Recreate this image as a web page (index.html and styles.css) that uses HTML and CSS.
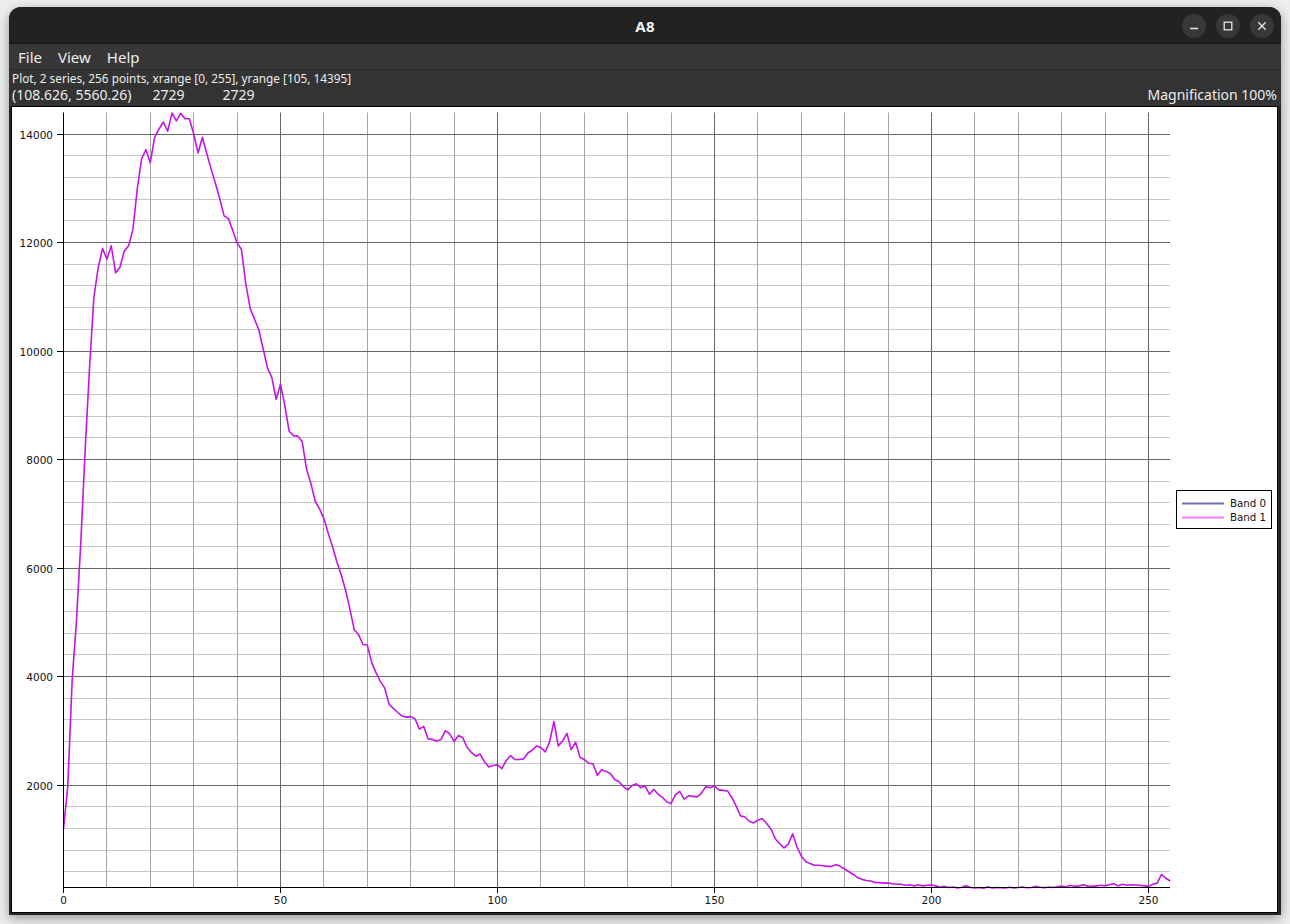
FILE: index.html
```html
<!DOCTYPE html>
<html>
<head>
<meta charset="utf-8">
<title>A8</title>
<link rel="stylesheet" href="styles.css">
</head>
<body>
<div class="window">
  <header class="titlebar">
    <div class="tb-spacer"></div>
    <div class="tb-title">A8</div>
    <div class="tb-controls">
      <span class="tb-btn"><svg width="24" height="24" viewBox="0 0 24 24"><line x1="8" y1="14.5" x2="16" y2="14.5" stroke="#e6e6e6" stroke-width="1.3"/></svg></span>
      <span class="tb-btn"><svg width="24" height="24" viewBox="0 0 24 24"><rect x="8.2" y="8.2" width="7.6" height="7.6" fill="none" stroke="#e6e6e6" stroke-width="1.3"/></svg></span>
      <span class="tb-btn"><svg width="24" height="24" viewBox="0 0 24 24"><path d="M8.3 8.3 L15.7 15.7 M15.7 8.3 L8.3 15.7" stroke="#e6e6e6" stroke-width="1.3" fill="none"/></svg></span>
    </div>
  </header>
  <nav class="menubar">
    <span class="menu-item">File</span>
    <span class="menu-item">View</span>
    <span class="menu-item">Help</span>
  </nav>
  <div class="infobar">
    <div class="info-line1">Plot, 2 series, 256 points, xrange [0, 255], yrange [105, 14395]</div>
    <div class="info-line2">
      <span class="coords">(108.626, 5560.26)</span>
      <span class="val1">2729</span>
      <span class="val2">2729</span>
      <span class="magnif">Magnification 100%</span>
    </div>
  </div>
  <div class="plotbox">
    <svg class="plot" width="1265" height="805" viewBox="12 107 1265 805">
      <rect x="12" y="107" width="1265" height="805" fill="#ffffff"/>
      <g class="grid-hminor">
        <line x1="63" x2="1170" y1="871.5" y2="871.5"/><line x1="63" x2="1170" y1="850.5" y2="850.5"/><line x1="63" x2="1170" y1="828.5" y2="828.5"/><line x1="63" x2="1170" y1="806.5" y2="806.5"/>
        <line x1="63" x2="1170" y1="763.5" y2="763.5"/><line x1="63" x2="1170" y1="741.5" y2="741.5"/><line x1="63" x2="1170" y1="719.5" y2="719.5"/><line x1="63" x2="1170" y1="698.5" y2="698.5"/>
        <line x1="63" x2="1170" y1="654.5" y2="654.5"/><line x1="63" x2="1170" y1="633.5" y2="633.5"/><line x1="63" x2="1170" y1="611.5" y2="611.5"/><line x1="63" x2="1170" y1="589.5" y2="589.5"/>
        <line x1="63" x2="1170" y1="546.5" y2="546.5"/><line x1="63" x2="1170" y1="524.5" y2="524.5"/><line x1="63" x2="1170" y1="502.5" y2="502.5"/><line x1="63" x2="1170" y1="481.5" y2="481.5"/>
        <line x1="63" x2="1170" y1="437.5" y2="437.5"/><line x1="63" x2="1170" y1="416.5" y2="416.5"/><line x1="63" x2="1170" y1="394.5" y2="394.5"/><line x1="63" x2="1170" y1="372.5" y2="372.5"/>
        <line x1="63" x2="1170" y1="329.5" y2="329.5"/><line x1="63" x2="1170" y1="307.5" y2="307.5"/><line x1="63" x2="1170" y1="285.5" y2="285.5"/><line x1="63" x2="1170" y1="264.5" y2="264.5"/>
        <line x1="63" x2="1170" y1="220.5" y2="220.5"/><line x1="63" x2="1170" y1="199.5" y2="199.5"/><line x1="63" x2="1170" y1="177.5" y2="177.5"/><line x1="63" x2="1170" y1="155.5" y2="155.5"/>
      </g>
      <g class="grid-vminor">
        <line y1="112.5" y2="887" x1="106.5" x2="106.5"/><line y1="112.5" y2="887" x1="150.5" x2="150.5"/><line y1="112.5" y2="887" x1="193.5" x2="193.5"/><line y1="112.5" y2="887" x1="237.5" x2="237.5"/>
        <line y1="112.5" y2="887" x1="323.5" x2="323.5"/><line y1="112.5" y2="887" x1="367.5" x2="367.5"/><line y1="112.5" y2="887" x1="410.5" x2="410.5"/><line y1="112.5" y2="887" x1="454.5" x2="454.5"/>
        <line y1="112.5" y2="887" x1="540.5" x2="540.5"/><line y1="112.5" y2="887" x1="584.5" x2="584.5"/><line y1="112.5" y2="887" x1="627.5" x2="627.5"/><line y1="112.5" y2="887" x1="671.5" x2="671.5"/>
        <line y1="112.5" y2="887" x1="757.5" x2="757.5"/><line y1="112.5" y2="887" x1="801.5" x2="801.5"/><line y1="112.5" y2="887" x1="844.5" x2="844.5"/><line y1="112.5" y2="887" x1="888.5" x2="888.5"/>
        <line y1="112.5" y2="887" x1="974.5" x2="974.5"/><line y1="112.5" y2="887" x1="1018.5" x2="1018.5"/><line y1="112.5" y2="887" x1="1061.5" x2="1061.5"/><line y1="112.5" y2="887" x1="1105.5" x2="1105.5"/>
      </g>
      <g class="grid-major">
        <line x1="63" x2="1170" y1="785.5" y2="785.5"/><line x1="63" x2="1170" y1="676.5" y2="676.5"/><line x1="63" x2="1170" y1="568.5" y2="568.5"/><line x1="63" x2="1170" y1="459.5" y2="459.5"/>
        <line x1="63" x2="1170" y1="351.5" y2="351.5"/><line x1="63" x2="1170" y1="242.5" y2="242.5"/><line x1="63" x2="1170" y1="134.5" y2="134.5"/>
        <line y1="112.5" y2="887" x1="280.5" x2="280.5"/><line y1="112.5" y2="887" x1="497.5" x2="497.5"/><line y1="112.5" y2="887" x1="714.5" x2="714.5"/><line y1="112.5" y2="887" x1="931.5" x2="931.5"/><line y1="112.5" y2="887" x1="1148.5" x2="1148.5"/>
      </g>
      <g transform="translate(63.5,894) scale(4.34,-0.05425)">
        <polyline class="series" points="0,1200 1,2000 2,3950 3,5050 4,6500 5,8200 6,9700 7,11000 8,11550 9,11900 10,11700 11,11950 12,11450 13,11550 14,11850 15,11950 16,12250 17,13000 18,13550 19,13720 20,13480 21,13950 22,14100 23,14230 24,14060 25,14395 26,14250 27,14390 28,14290 29,14290 30,14010 31,13660 32,13950 33,13650 34,13370 35,13100 36,12820 37,12500 38,12450 39,12230 40,12000 41,11880 42,11250 43,10800 44,10600 45,10400 46,10050 47,9700 48,9520 49,9120 50,9400 51,9000 52,8530 53,8450 54,8440 55,8340 56,7830 57,7570 58,7240 59,7100 60,6920 61,6650 62,6400 63,6120 64,5880 65,5600 66,5250 67,4870 68,4780 69,4600 70,4590 71,4270 72,4080 73,3920 74,3800 75,3500 76,3420 77,3350 78,3280 79,3260 80,3270 81,3230 82,3040 83,3090 84,2860 85,2850 86,2820 87,2850 88,3010 89,2950 90,2810 91,2920 92,2880 93,2700 94,2610 95,2540 96,2580 97,2440 98,2340 99,2370 100,2380 101,2310 102,2460 103,2550 104,2480 105,2480 106,2490 107,2600 108,2650 109,2730 110,2700 111,2620 112,2800 113,3180 114,2730 115,2820 116,2960 117,2660 118,2800 119,2520 120,2480 121,2410 122,2400 123,2190 124,2290 125,2260 126,2220 127,2110 128,2070 129,1980 130,1920 131,2000 132,2030 133,1960 134,1990 135,1840 136,1930 137,1840 138,1780 139,1700 140,1670 141,1830 142,1890 143,1750 144,1810 145,1800 146,1790 147,1860 148,1980 149,1960 150,1990 151,1920 152,1910 153,1900 154,1780 155,1620 156,1440 157,1420 158,1340 159,1310 160,1360 161,1390 162,1300 163,1200 164,1020 165,930 166,850 167,920 168,1110 169,870 170,700 171,600 172,560 173,530 174,530 175,520 176,510 177,510 178,540 179,510 180,460 181,410 182,360 183,300 184,270 185,250 186,240 187,210 188,210 189,200 190,200 191,190 192,180 193,180 194,160 195,170 196,150 197,170 198,150 199,160 200,165 201,150 202,130 203,140 204,120 205,130 206,110 207,125 208,150 209,120 210,110 211,120 212,105 213,130 214,110 215,120 216,115 217,110 218,125 219,110 220,120 221,130 222,115 223,120 224,140 225,125 226,115 227,130 228,120 229,135 230,145 231,130 232,160 233,140 234,150 235,170 236,145 237,140 238,150 239,160 240,155 241,170 242,190 243,150 244,180 245,160 246,170 247,165 248,160 249,150 250,140 251,180 252,200 253,360 254,290 255,240"/>
      </g>
      <g class="axes">
        <line x1="63.5" y1="112.5" x2="63.5" y2="888"/>
        <line x1="63" y1="887.5" x2="1170" y2="887.5"/>
        <line x1="57" y1="785.5" x2="63" y2="785.5"/>
        <line x1="57" y1="676.5" x2="63" y2="676.5"/>
        <line x1="57" y1="568.5" x2="63" y2="568.5"/>
        <line x1="57" y1="459.5" x2="63" y2="459.5"/>
        <line x1="57" y1="351.5" x2="63" y2="351.5"/>
        <line x1="57" y1="242.5" x2="63" y2="242.5"/>
        <line x1="57" y1="134.5" x2="63" y2="134.5"/>
        <line x1="63.5" y1="888" x2="63.5" y2="893"/>
        <line x1="280.5" y1="888" x2="280.5" y2="893"/>
        <line x1="497.5" y1="888" x2="497.5" y2="893"/>
        <line x1="714.5" y1="888" x2="714.5" y2="893"/>
        <line x1="931.5" y1="888" x2="931.5" y2="893"/>
        <line x1="1148.5" y1="888" x2="1148.5" y2="893"/>
      </g>
      <g class="ylabels">
        <text x="53" y="789.5">2000</text>
        <text x="53" y="681">4000</text>
        <text x="53" y="572.5">6000</text>
        <text x="53" y="464">8000</text>
        <text x="53" y="355.5">10000</text>
        <text x="53" y="247">12000</text>
        <text x="53" y="138.5">14000</text>
      </g>
      <g class="xlabels">
        <text x="63.5" y="904">0</text>
        <text x="280.5" y="904">50</text>
        <text x="497.5" y="904">100</text>
        <text x="714.5" y="904">150</text>
        <text x="931.5" y="904">200</text>
        <text x="1148.5" y="904">250</text>
      </g>
      <g class="legend">
        <rect x="1176.5" y="490.5" width="95" height="38" fill="#ffffff" stroke="#000000" stroke-width="1"/>
        <line x1="1182" y1="503.5" x2="1224" y2="503.5" stroke="#7070b4" stroke-width="1.8"/>
        <line x1="1182" y1="517.5" x2="1224" y2="517.5" stroke="#ff78ff" stroke-width="1.8"/>
        <text x="1230" y="507">Band 0</text>
        <text x="1230" y="521">Band 1</text>
      </g>
    </svg>
  </div>
</div>
</body>
</html>
```
FILE: styles.css
```css
html, body {
  margin: 0;
  padding: 0;
}
body {
  background: #eeeeee;
  width: 1290px;
  height: 924px;
  overflow: hidden;
  font-family: "Noto Sans", "DejaVu Sans", sans-serif;
}
.window {
  margin: 7px 0 0 9px;
  width: 1272px;
  height: 908px;
  background: #262626;
  border-radius: 12px 12px 0 0;
  overflow: hidden;
  box-shadow: 0 3px 12px rgba(0, 0, 0, 0.38);
  display: flex;
  flex-direction: column;
}
.titlebar {
  height: 36px;
  border-bottom: 1px solid #191919;
  background: #222222;
  display: grid;
  grid-template-columns: 1fr auto 1fr;
  align-items: center;
  flex: none;
}
.tb-title {
  color: #f2f2f2;
  font-weight: 700;
  font-size: 15px;
  letter-spacing: 0.2px;
  padding-top: 1px;
}
.tb-controls {
  display: flex;
  justify-content: flex-end;
  gap: 10px;
  padding-right: 7px;
  padding-top: 2px;
}
.tb-btn {
  width: 24px;
  height: 24px;
  border-radius: 50%;
  background: #383838;
  display: block;
}
.tb-btn svg {
  display: block;
}
.menubar {
  height: 25px;
  background: #373737;
  display: flex;
  align-items: center;
  gap: 16px;
  padding-left: 9px;
  flex: none;
  border-bottom: 1px solid #2c2c2c;
}
.menu-item {
  color: #ededed;
  font-size: 15px;
  line-height: 25px;
  padding-top: 1px;
}
.infobar {
  height: 36px;
  background: #333333;
  color: #ececec;
  padding-left: 3px;
  padding-right: 4px;
  flex: none;
}
.info-line1 {
  font-size: 11.8px;
  line-height: 16px;
  white-space: nowrap;
}
.info-line2 {
  font-size: 14px;
  line-height: 17px;
  display: flex;
  white-space: nowrap;
}
.val1 {
  margin-left: 21px;
}
.val2 {
  margin-left: 38px;
}
.magnif {
  margin-left: auto;
}
.plotbox {
  margin: 0 3px 0 2px;
  border: 1px solid #000000;
  height: 805px;
  background: #ffffff;
  flex: none;
}
.plot {
  display: block;
}
.grid-hminor line {
  stroke: #c6c6c6;
  stroke-width: 1;
}
.grid-vminor line {
  stroke: #a6a6a6;
  stroke-width: 1;
}
.grid-major line {
  stroke: #666666;
  stroke-width: 1;
}
.series {
  fill: none;
  stroke: #c414e8;
  stroke-width: 1.6;
  stroke-linejoin: round;
  vector-effect: non-scaling-stroke;
}
.axes line {
  stroke: #000000;
  stroke-width: 1;
}
.ylabels text {
  font-family: "DejaVu Sans", sans-serif;
  font-size: 10.5px;
  fill: #111111;
  text-anchor: end;
}
.xlabels text {
  font-family: "DejaVu Sans", sans-serif;
  font-size: 10.5px;
  fill: #111111;
  text-anchor: middle;
}
.legend text {
  font-family: "DejaVu Sans", sans-serif;
  font-size: 10.2px;
  fill: #111111;
}
```
